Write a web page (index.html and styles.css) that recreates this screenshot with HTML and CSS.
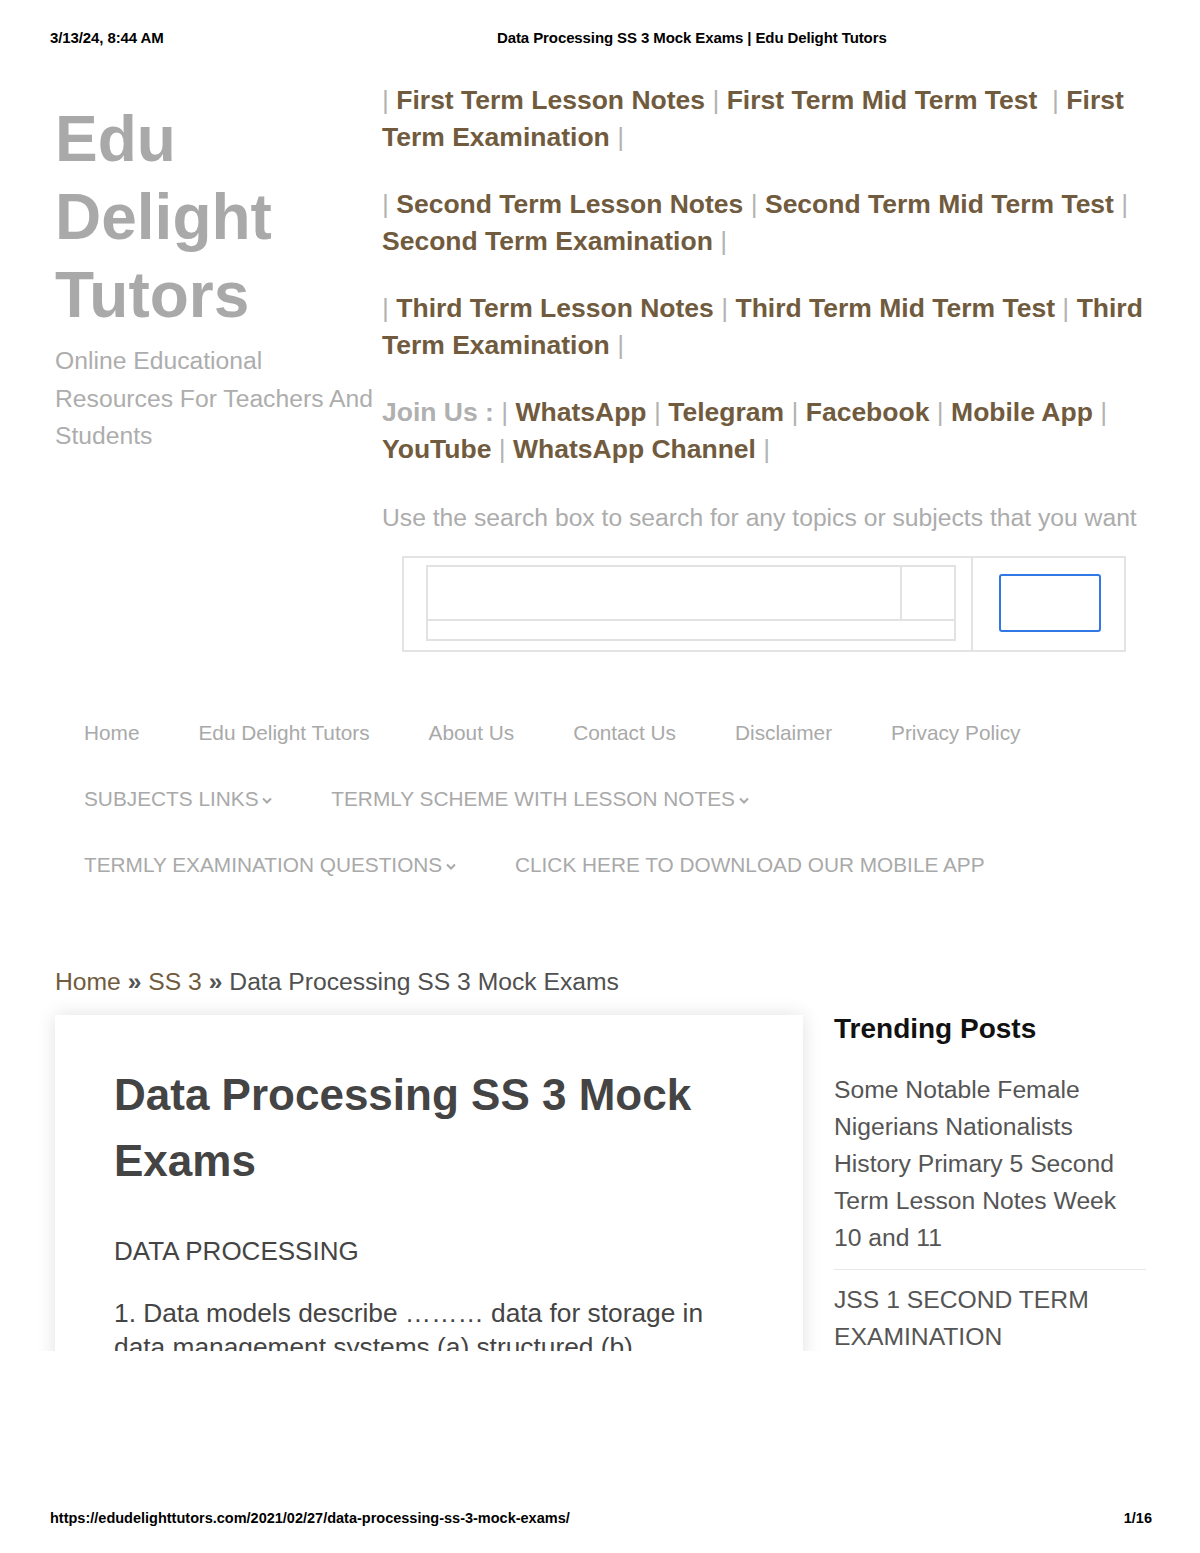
FILE: index.html
```html
<!DOCTYPE html>
<html lang="en">
<head>
<meta charset="utf-8">
<title>Data Processing SS 3 Mock Exams | Edu Delight Tutors</title>
<link rel="stylesheet" href="styles.css">
</head>
<body>
<div class="pagehead">
  <span class="stamp">3/13/24, 8:44 AM</span>
  <span class="doctitle">Data Processing SS 3 Mock Exams | Edu Delight Tutors</span>
</div>

<div class="sheet">
  <header class="site-header">
    <div class="brand">
      <h1 class="logo">Edu<br>Delight<br>Tutors</h1>
      <p class="tagline">Online Educational Resources For Teachers And Students</p>
    </div>
    <div class="links">
      <p class="linkrow"><span class="sep">|</span> <a>First Term Lesson Notes</a> <span class="sep">|</span> <a>First Term Mid Term Test</a>&nbsp; <span class="sep">|</span> <a>First Term Examination</a> <span class="sep">|</span></p>
      <p class="linkrow"><span class="sep">|</span> <a>Second Term Lesson Notes</a> <span class="sep">|</span> <a>Second Term Mid Term Test</a> <span class="sep">|</span> <a>Second Term Examination</a> <span class="sep">|</span></p>
      <p class="linkrow"><span class="sep">|</span> <a>Third Term Lesson Notes</a> <span class="sep">|</span> <a>Third Term Mid Term Test</a> <span class="sep">|</span> <a>Third Term Examination</a> <span class="sep">|</span></p>
      <p class="linkrow"><span class="join">Join Us :</span> <span class="sep">|</span> <a>WhatsApp</a> <span class="sep">|</span> <a>Telegram</a> <span class="sep">|</span> <a>Facebook</a> <span class="sep">|</span> <a>Mobile App</a> <span class="sep">|</span> <a>YouTube</a> <span class="sep">|</span> <a>WhatsApp Channel</a> <span class="sep">|</span></p>
      <p class="hint">Use the search box to search for any topics or subjects that you want</p>
      <div class="searchbox">
        <div class="search-left">
          <div class="search-input">
            <div class="si-top"><div class="si-field"></div><div class="si-side"></div></div>
            <div class="si-bottom"></div>
          </div>
        </div>
        <div class="search-right">
          <div class="search-btn"></div>
        </div>
      </div>
    </div>
  </header>

  <nav class="mainnav">
    <a class="navitem">Home</a>
    <a class="navitem">Edu Delight Tutors</a>
    <a class="navitem">About Us</a>
    <a class="navitem">Contact Us</a>
    <a class="navitem">Disclaimer</a>
    <a class="navitem">Privacy Policy</a>
    <a class="navitem upper">SUBJECTS LINKS <svg class="chev" viewBox="0 0 10 7" width="10" height="7"><polyline points="1,1.5 5,5.5 9,1.5"/></svg></a>
    <a class="navitem upper">TERMLY SCHEME WITH LESSON NOTES <svg class="chev" viewBox="0 0 10 7" width="10" height="7"><polyline points="1,1.5 5,5.5 9,1.5"/></svg></a>
    <a class="navitem upper">TERMLY EXAMINATION QUESTIONS <svg class="chev" viewBox="0 0 10 7" width="10" height="7"><polyline points="1,1.5 5,5.5 9,1.5"/></svg></a>
    <a class="navitem upper">CLICK HERE TO DOWNLOAD OUR MOBILE APP</a>
  </nav>

  <div class="breadcrumb"><a>Home</a> <span class="raq">»</span> <a>SS 3</a> <span class="raq">»</span> Data Processing SS 3 Mock Exams</div>

  <div class="main">
    <article class="card">
      <h2 class="post-title">Data Processing SS 3 Mock Exams</h2>
      <p class="subject">DATA PROCESSING</p>
      <p class="question">1. Data models describe ……… data for storage in data management systems (a) structured (b) unstructured (c) organized (d) multiple</p>
    </article>
    <aside class="sidebar">
      <h3 class="side-title">Trending Posts</h3>
      <ul class="trend">
        <li>Some Notable Female Nigerians Nationalists History Primary 5 Second Term Lesson Notes Week 10 and 11</li>
        <li>JSS 1 SECOND TERM EXAMINATION</li>
      </ul>
    </aside>
  </div>
</div>

<div class="pagefoot">
  <span>https://edudelighttutors.com/2021/02/27/data-processing-ss-3-mock-exams/</span>
  <span>1/16</span>
</div>
</body>
</html>
```

FILE: styles.css
```css
html, body {
  margin: 0;
  padding: 0;
  background: #fff;
}
body {
  width: 1200px;
  height: 1553px;
  overflow: hidden;
  font-family: "Liberation Sans", Arial, sans-serif;
}

/* print header / footer */
.pagehead {
  height: 60px;
  box-sizing: border-box;
  padding: 30px 0 0 50px;
  display: grid;
  grid-template-columns: 447px 1fr;
  font-size: 15px;
  line-height: 16px;
  font-weight: bold;
  color: #000;
  letter-spacing: -0.1px;
}
.pagefoot {
  margin-top: 159px;
  padding: 0 48px 0 50px;
  display: flex;
  justify-content: space-between;
  font-size: 14.5px;
  line-height: 16px;
  font-weight: bold;
  color: #000;
}

.sheet {
  height: 1291px;
  overflow: hidden;
  box-sizing: border-box;
  padding: 0 50px 0 55px;
}

/* header */
.site-header {
  display: flex;
  padding-top: 22px;
}
.brand {
  width: 320px;
  flex: none;
  margin-top: 18px;
  margin-right: 7px;
}
.logo {
  margin: 0;
  font-size: 64px;
  line-height: 78px;
  font-weight: bold;
  color: #a9a9a9;
}
.tagline {
  margin: 8px 0 0;
  font-size: 24.7px;
  line-height: 37.5px;
  color: #adadad;
}
.links {
  flex: 1;
}
.linkrow {
  margin: 0 0 30px;
  font-size: 26.5px;
  line-height: 37px;
  font-weight: bold;
  color: #715b3e;
}
.linkrow a { color: #715b3e; }
.sep {
  color: #b3b3b3;
  font-weight: normal;
}
.join { color: #b0b0b0; }
.hint {
  margin: 0;
  font-size: 24.7px;
  line-height: 40px;
  color: #acacac;
  white-space: nowrap;
}

/* search box */
.searchbox {
  margin: 18px 0 0 20px;
  width: 724px;
  height: 96px;
  box-sizing: border-box;
  border: 2px solid #e4e4e4;
  display: flex;
}
.search-left {
  width: 569px;
  box-sizing: border-box;
  border-right: 2px solid #e4e4e4;
  padding: 7px 0 0 22px;
}
.search-input {
  width: 530px;
  height: 76px;
  box-sizing: border-box;
  border: 2px solid #e2e2e2;
  display: flex;
  flex-direction: column;
}
.si-top {
  height: 52px;
  display: flex;
  border-bottom: 2px solid #e2e2e2;
}
.si-field { flex: 1; border-right: 2px solid #e2e2e2; }
.si-side { width: 52px; }
.si-bottom { flex: 1; }
.search-right {
  flex: 1;
  display: flex;
  align-items: center;
  justify-content: center;
}
.search-btn {
  width: 102px;
  height: 58px;
  box-sizing: border-box;
  border: 2px solid #2f78e6;
  border-radius: 3px;
  margin: 0 0 3px 2px;
}

/* nav */
.mainnav {
  margin-top: 48px;
  padding-left: 29px;
  display: flex;
  flex-wrap: wrap;
  column-gap: 59px;
}
.navitem {
  font-size: 20.8px;
  line-height: 66px;
  color: #a9a9a9;
  white-space: nowrap;
}
.chev {
  fill: none;
  stroke: #a9a9a9;
  stroke-width: 2;
  vertical-align: 2px;
  margin-left: -2px;
}

/* breadcrumb */
.breadcrumb {
  margin-top: 67px;
  font-size: 24.7px;
  line-height: 34px;
  color: #505050;
}
.breadcrumb a { color: #715b3e; }
.raq { font-weight: bold; color: #555; }

/* main */
.main {
  margin-top: 16px;
  display: flex;
  align-items: flex-start;
}
.card {
  width: 748px;
  flex: none;
  min-height: 600px;
  box-sizing: border-box;
  padding: 47px 59px 0;
  background: #fff;
  box-shadow: 0 0 18px rgba(0, 0, 0, 0.12);
}
.post-title {
  margin: 0;
  font-size: 44px;
  line-height: 66px;
  font-weight: bold;
  color: #444;
}
.subject {
  margin: 40px 0 0;
  font-size: 26px;
  line-height: 34px;
  color: #444;
}
.question {
  margin: 28px 0 0;
  font-size: 26.3px;
  line-height: 34px;
  color: #444;
}
.sidebar {
  width: 312px;
  flex: none;
  margin-left: 31px;
  margin-top: -3px;
}
.side-title {
  margin: 0;
  font-size: 28px;
  line-height: 34px;
  font-weight: bold;
  color: #111;
}
.trend {
  list-style: none;
  margin: 25px 0 0;
  padding: 0;
}
.trend li {
  font-size: 24.7px;
  line-height: 37px;
  color: #555;
  padding-bottom: 13px;
  border-bottom: 1px solid #e8e8e8;
}
.trend li + li {
  padding-top: 11px;
}
```
